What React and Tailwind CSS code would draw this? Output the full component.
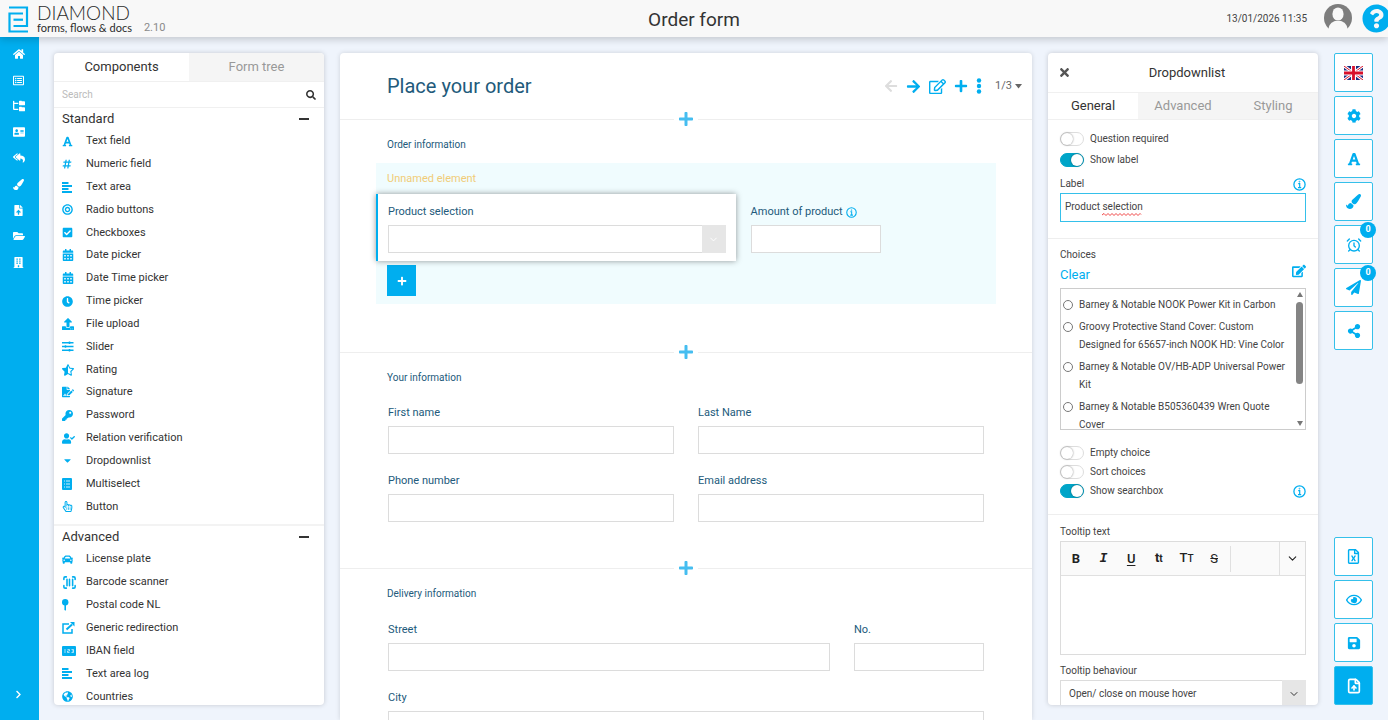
import React, { useState } from 'react';
import {
  FaHome, FaRegListAlt, FaAddressCard, FaReplyAll, FaPaintBrush, FaFileUpload, FaFolderOpen, FaBuilding,
  FaChevronRight, FaSearch, FaFont, FaHashtag, FaBullseye, FaCheckSquare, FaCalendarAlt,
  FaClock, FaUpload, FaStarHalfAlt, FaFileSignature, FaKey, FaUserCheck, FaCaretDown,
  FaRegHandPointer, FaCar, FaGlobeAmericas, FaArrowLeft, FaArrowRight,
  FaRegEdit, FaPlus, FaEdit, FaTimes, FaCog, FaPaperPlane, FaShareAlt, FaRegFileExcel, FaRegEye, FaSave,
  FaQuestionCircle,
} from 'react-icons/fa';
import { FaFolderTree } from 'react-icons/fa6';
import { AlarmClock, ChevronDown, FileUp, ScanBarcode } from 'lucide-react';

const InfoIcon = ({ size }) => (
  <svg width={size} height={size} viewBox="0 0 13 13" fill="none" stroke="#00aeef">
    <circle cx="6.5" cy="6.5" r="5.6" strokeWidth="1.3" />
    <path d="M5.200 5.700h1.500v4M5 9.600h3.200" strokeWidth="1.200" />
    <circle cx="6.5" cy="3.700" r="0.500" strokeWidth="0.800" />
  </svg>
);

const LinesIcon = () => (
  <svg width="11" height="11" viewBox="0 0 11 11" stroke="currentColor" strokeWidth="1.800">
    <path d="M0 1h6.500M0 4h10M0 7h6.500M0 10h10" />
  </svg>
);

const SliderIcon = () => (
  <svg width="12" height="11" viewBox="0 0 12 11" stroke="currentColor" strokeWidth="1.500">
    <path d="M0 1.700h11.500M0 5.500h11.500M0 9.300h11.500M7.500 0.400v2.600M3.500 4.200v2.600M7.500 8v2.600" />
  </svg>
);

const PinIcon = () => (
  <svg width="8" height="12" viewBox="0 0 8 12" fill="currentColor">
    <circle cx="3.200" cy="3.300" r="3.200" />
    <path d="M2.400 6H4v4.500L3.200 12l-.8-1.500z" />
  </svg>
);

const RedirectIcon = () => (
  <svg width="13" height="12" viewBox="0 0 13 12" fill="none" stroke="currentColor">
    <path d="M7 2H1v9h9V7" strokeWidth="1.500" />
    <path d="M4.500 7.500l5.500-5" strokeWidth="2" />
    <path d="M8 0h4.500v4.500z" fill="currentColor" stroke="none" />
  </svg>
);

const MultiselectIcon = () => (
  <svg width="10" height="12" viewBox="0 0 10 12">
    <rect width="10" height="12" rx="1" fill="currentColor" />
    <path d="M2 3h1M4 3h4M2 6h1M4 6h4M2 9h1M4 9h4" stroke="#fff" strokeWidth="0.800" />
  </svg>
);

const IbanIcon = () => (
  <svg width="14" height="10" viewBox="0 0 14 10">
    <rect width="14" height="10" rx="1" fill="currentColor" />
    <path d="M3 3v4M5.500 3.500h2v1.500h-2v1.500h2M9.500 3.500h2v3h-2M10 5h1.500" stroke="#fff" strokeWidth="0.800" fill="none" opacity="0.8" />
  </svg>
);

const standard = [
  { name: 'Text field', icon: <FaFont size={11} /> },
  { name: 'Numeric field', icon: <FaHashtag size={10} /> },
  { name: 'Text area', icon: <LinesIcon /> },
  { name: 'Radio buttons', icon: <FaBullseye size={11} /> },
  { name: 'Checkboxes', icon: <FaCheckSquare size={11} /> },
  { name: 'Date picker', icon: <FaCalendarAlt size={12} /> },
  { name: 'Date Time picker', icon: <FaCalendarAlt size={12} /> },
  { name: 'Time picker', icon: <FaClock size={11} /> },
  { name: 'File upload', icon: <FaUpload size={12} /> },
  { name: 'Slider', icon: <SliderIcon /> },
  { name: 'Rating', icon: <FaStarHalfAlt size={12} /> },
  { name: 'Signature', icon: <FaFileSignature size={12} /> },
  { name: 'Password', icon: <FaKey size={11} /> },
  { name: 'Relation verification', icon: <FaUserCheck size={13} /> },
  { name: 'Dropdownlist', icon: <FaCaretDown size={11} /> },
  { name: 'Multiselect', icon: <MultiselectIcon /> },
  { name: 'Button', icon: <FaRegHandPointer size={11} /> },
];

const advanced = [
  { name: 'License plate', icon: <FaCar size={11} /> },
  { name: 'Barcode scanner', icon: <ScanBarcode size={15} strokeWidth={2.5} /> },
  { name: 'Postal code NL', icon: <PinIcon /> },
  { name: 'Generic redirection', icon: <RedirectIcon /> },
  { name: 'IBAN field', icon: <IbanIcon /> },
  { name: 'Text area log', icon: <LinesIcon /> },
  { name: 'Countries', icon: <FaGlobeAmericas size={11} /> },
];

const navItems = [
  { label: 'Home', icon: <FaHome size={12} /> },
  { label: 'Lists', icon: <FaRegListAlt size={11} /> },
  { label: 'Structure', icon: <FaFolderTree size={12} /> },
  { label: 'Contacts', icon: <FaAddressCard size={12} /> },
  { label: 'Replies', icon: <FaReplyAll size={12} /> },
  { label: 'Themes', icon: <FaPaintBrush size={11} /> },
  { label: 'Documents', icon: <FaFileUpload size={11} /> },
  { label: 'Files', icon: <FaFolderOpen size={12} /> },
  { label: 'Organisation', icon: <FaBuilding size={11} /> },
];

const choices = [
  'Barney & Notable NOOK Power Kit in Carbon',
  'Groovy Protective Stand Cover: Custom Designed for 65657-inch NOOK HD: Vine Color',
  'Barney & Notable OV/HB-ADP Universal Power Kit',
  'Barney & Notable B505360439 Wren Quote Cover',
];

const Logo = () => (
  <svg width="22" height="27" viewBox="0 0 22 27" fill="none" stroke="#00aeef" strokeWidth="2.200">
    <path d="M1 1.500h18v18.500H5.500" />
    <path d="M15 7.500H1.500v18h18.500" />
    <path d="M5.500 13.700h9.500" />
  </svg>
);

const Avatar = () => (
  <svg width="28" height="25" viewBox="0 0 28 25">
    <circle cx="14" cy="14" r="14" fill="#7d7d7d" />
    <ellipse cx="14" cy="10" rx="5.600" ry="6.600" fill="#f8f8f8" />
    <path d="M4.500 25c.6-5 3-6.500 6.500-8h6c3.500 1.500 5.900 3 6.500 8z" fill="#f8f8f8" />
  </svg>
);

const Flag = () => (
  <svg width="19" height="14" viewBox="0 0 19 14">
    <rect width="19" height="14" fill="#1b2c80" />
    <path d="M0 0l19 14M19 0L0 14" stroke="#fff" strokeWidth="3" />
    <path d="M0 0l19 14M19 0L0 14" stroke="#d8102a" strokeWidth="1" />
    <path d="M9.500 0v14M0 7h19" stroke="#fff" strokeWidth="5" />
    <path d="M9.500 0v14M0 7h19" stroke="#d8102a" strokeWidth="2.800" />
  </svg>
);

const Header = () => (
  <header className="relative z-20 flex h-[37px] shrink-0 items-center bg-[#f8f8f8] shadow-[0_2px_8px_rgba(0,0,0,0.2)]">
    <div className="flex flex-1 items-start">
      <div className="pt-[2px] pl-2">
        <Logo />
      </div>
      <div className="pl-[7px] font-[Lato] text-[#2b2b2b]">
        <div className="text-[19px] font-light leading-[18px]">DIAMOND</div>
        <div className="text-[11px] leading-3">forms, flows &amp; docs</div>
      </div>
      <div className="self-end pl-3 text-[11px] leading-3 text-[#8a8a8a]">2.10</div>
    </div>
    <h1 className="pt-[2px] text-[19px] leading-6 text-[#333]">Order form</h1>
    <div className="flex flex-1 items-center justify-end overflow-hidden">
      <time className="mr-[17px] text-[10px] text-[#444]">13/01/2026 11:35</time>
      <button aria-label="Profile" className="mr-[10px] mb-[5px]"><Avatar /></button>
      <button aria-label="Help" className="-mr-[3px] text-[#00aeef]"><FaQuestionCircle size={29} /></button>
    </div>
  </header>
);

const NavBar = () => (
  <nav className="relative z-10 flex w-[39px] shrink-0 flex-col items-center bg-[#00aeef] pt-1 pr-[2px] text-white">
    {navItems.map((n) => (
      <button key={n.label} aria-label={n.label} className="flex h-[26px] w-full items-center justify-center">
        {n.icon}
      </button>
    ))}
    <button aria-label="Expand menu" className="mt-auto mb-4 flex h-5 w-full items-center justify-center">
      <FaChevronRight size={9} />
    </button>
  </nav>
);

const Group = ({ title, items, listClass }) => (
  <section className="pl-2">
    <div className="flex h-[22px] items-center justify-between pr-[15px]">
      <h2 className="text-[13px] leading-4 text-[#333]">{title}</h2>
      <button aria-label={`Collapse ${title}`} className="h-[2px] w-[10px] bg-[#333]"></button>
    </div>
    <ul className={listClass}>
      {items.map((item) => (
        <li key={item.name} className="flex items-center">
          <span className="w-6 text-[#00aeef]">{item.icon}</span>
          <span className="text-[11px] leading-4 text-[#333]">{item.name}</span>
        </li>
      ))}
    </ul>
  </section>
);

const ComponentsPanel = () => (
  <aside className="mb-[15px] flex w-[270px] shrink-0 flex-col overflow-hidden rounded-sm bg-white shadow-[0_0_5px_rgba(0,0,0,0.18)]">
    <div className="grid shrink-0 grid-cols-2 text-[13px]">
      <button className="h-7 text-[#333]">Components</button>
      <button className="h-7 bg-[#f5f5f5] text-[#999]">Form tree</button>
    </div>
    <div className="flex h-[27px] shrink-0 items-center border-y border-[#f0f0f0] px-2">
      <input aria-label="Search" placeholder="Search" className="min-w-0 flex-1 text-[10px] outline-none placeholder:text-[#bbb]" />
      <FaSearch size={10} className="text-[#333]" />
    </div>
    <div className="shrink-0 border-b-2 border-[#f3f3f3] pb-[6px]">
      <Group title="Standard" items={standard} listClass="grid h-[388px]" />
    </div>
    <Group title="Advanced" items={advanced} listClass="grid h-[160px]" />
  </aside>
);

const Field = ({ id, label, info }) => (
  <div>
    <label htmlFor={id} className="flex items-center gap-[3px] text-[11px] leading-4 text-[#225a7b]">
      {label}
      {info && <InfoIcon size={11} />}
    </label>
    <input id={id} className="mt-[5px] block h-7 w-full border border-[#dcdcdc] bg-white px-2 text-[11px]" />
  </div>
);

const FormSection = ({ title, children }) => (
  <section className="relative border-t border-[#eee] px-12 pt-[17px] pb-[46px]">
    <button aria-label="Add section" className="absolute -top-[9px] left-1/2 -translate-x-1/2 bg-white px-1 text-[#45bdf0]">
      <FaPlus size={16} />
    </button>
    <h3 className="-ml-px text-[10px] leading-4 text-[#225a7b]">{title}</h3>
    {children}
  </section>
);

const FormCanvas = () => (
  <main className="min-w-0 flex-1 overflow-hidden rounded-t-sm bg-white shadow-[0_0_5px_rgba(0,0,0,0.14)]">
    <div className="flex h-[66px] items-center justify-between pr-[10px] pl-[47px]">
      <h2 className="text-[20px] leading-6 text-[#225a7b]">Place your order</h2>
      <div className="flex items-center gap-2 text-[#00aeef]">
        <button aria-label="Previous page" className="text-[#ddd]"><FaArrowLeft size={14} /></button>
        <button aria-label="Next page"><FaArrowRight size={15} /></button>
        <button aria-label="Edit page"><FaRegEdit size={17} /></button>
        <button aria-label="Add page"><FaPlus size={14} /></button>
        <button aria-label="More">
          <svg width="6" height="16" viewBox="0 0 6 16" fill="currentColor">
            <circle cx="3" cy="2.500" r="2.200" />
            <circle cx="3" cy="8" r="2.200" />
            <circle cx="3" cy="13.500" r="2.200" />
          </svg>
        </button>
        <button className="ml-[5px] flex items-center gap-[3px] text-[11px] leading-4 text-[#666]">
          1/3
          <svg width="7" height="5" viewBox="0 0 7 5" fill="currentColor"><path d="M0 0h7L3.500 4.500z" /></svg>
        </button>
      </div>
    </div>

    <FormSection title="Order information">
      <div className="-mx-3 mt-[10px] mb-[2px] bg-[#f0fcfe] pt-2 pb-2">
        <p className="pl-[11px] text-[11px] leading-4 text-[#f0cc78]">Unnamed element</p>
        <div className="mt-[7px] flex">
          <div className="w-[58%] border-l-2 border-[#00aeef] bg-white px-[10px] pt-[10px] pb-2 shadow-[0_0_6px_rgba(0,0,0,0.4)]">
            <label htmlFor="product" className="block text-[11px] leading-4 text-[#225a7b]">Product selection</label>
            <div className="relative mt-[5px]">
              <select id="product" className="block h-7 w-full appearance-none border border-[#dcdcdc] bg-white px-2 text-[11px]">
                <option></option>
              </select>
              <span className="pointer-events-none absolute inset-y-0 right-0 flex w-6 items-center justify-center bg-[#e6e6e6] text-white">
                <ChevronDown size={11} />
              </span>
            </div>
          </div>
          <div className="ml-[15px] w-[21%] pt-[10px]">
            <Field id="amount" label="Amount of product" info />
          </div>
        </div>
        <button aria-label="Add element" className="mt-1 ml-[11px] flex h-[31px] w-[29px] items-center justify-center bg-[#00aeef] text-white">
          <FaPlus size={10} />
        </button>
      </div>
    </FormSection>

    <FormSection title="Your information">
      <div className="mt-[19px] grid grid-cols-2 gap-x-6 gap-y-[19px]">
        <Field id="first" label="First name" />
        <Field id="last" label="Last Name" />
        <Field id="phone" label="Phone number" />
        <Field id="email" label="Email address" />
      </div>
    </FormSection>

    <FormSection title="Delivery information">
      <div className="mt-5 grid grid-cols-[1fr_130px] gap-x-6 gap-y-[19px]">
        <Field id="street" label="Street" />
        <Field id="no" label="No." />
        <div className="col-span-2">
          <Field id="city" label="City" />
        </div>
      </div>
    </FormSection>
  </main>
);

const Toggle = ({ label, on }) => {
  const [checked, setChecked] = useState(!!on);
  return (
    <label className="flex items-center gap-[6px] text-[10px] leading-4 text-[#444]">
      <input
        type="checkbox"
        checked={checked}
        onChange={(e) => setChecked(e.target.checked)}
        className="h-[14px] w-6 appearance-none rounded-full border border-[#ddd] bg-white before:block before:size-3 before:rounded-full before:bg-white before:shadow-[0_0_2px_rgba(0,0,0,0.5)] checked:border-[#00a5c8] checked:bg-[#00a5c8] checked:before:ml-[10px]"
      />
      {label}
    </label>
  );
};

const TextTools = () => (
  <div className="flex h-[34px] items-center border-b border-[#e0e0e0] bg-[#fafafa] text-[13px] leading-4 text-[#222]">
    <div className="ml-px grid w-[166px] grid-cols-6">
      <button aria-label="Bold" className="font-bold">B</button>
      <button aria-label="Italic" className="font-['Liberation_Mono'] font-bold italic">I</button>
      <button aria-label="Underline" className="font-medium underline underline-offset-2">U</button>
      <button aria-label="Lowercase" className="font-bold">t<span className="text-[10px]">t</span></button>
      <button aria-label="Uppercase" className="font-medium">T<span className="text-[10px]">T</span></button>
      <button aria-label="Strikethrough" className="line-through">S</button>
    </div>
    <div className="ml-[2px] h-[26px] w-px bg-[#e0e0e0]"></div>
    <button aria-label="More tools" className="ml-auto flex h-full w-[26px] items-center justify-center border-l border-[#e0e0e0]">
      <ChevronDown size={13} />
    </button>
  </div>
);

const PropertiesPanel = () => {
  const [label, setLabel] = useState('Product selection');

  return (
    <aside className="mb-[15px] w-[270px] shrink-0 overflow-hidden rounded-sm bg-white text-[#444] shadow-[0_0_5px_rgba(0,0,0,0.18)]">
      <div className="grid h-[39px] grid-cols-[33px_1fr_25px] items-center">
        <button aria-label="Close" className="flex justify-center text-[#555]"><FaTimes size={13} /></button>
        <h2 className="text-center text-[13px] text-[#333]">Dropdownlist</h2>
      </div>
      <div className="grid h-7 grid-cols-3 border-y border-[#f0f0f0] text-[13px] text-[#999]">
        <button className="text-[#333]">General</button>
        <button className="bg-[#f5f5f5]">Advanced</button>
        <button className="bg-[#f5f5f5]">Styling</button>
      </div>

      <div className="px-3 pt-[11px] pb-4">
        <div className="flex flex-col gap-[5px]">
          <Toggle label="Question required" />
          <Toggle label="Show label" on />
        </div>
        <div className="mt-2 flex items-center justify-between">
          <label htmlFor="labelText" className="text-[10px] leading-4">Label</label>
          <InfoIcon size={13} />
        </div>
        <div className="relative mt-px">
          <input
            id="labelText"
            value={label}
            spellCheck={false}
            onChange={(e) => setLabel(e.target.value)}
            className="block h-[29px] w-full border border-[#35c0ea] px-1 pb-[2px] text-[10px] outline-none"
          />
          <svg className="absolute bottom-[6px] left-[42px]" width="41" height="3" viewBox="0 0 41 3">
            <path d="M0 2l2-1.500 2 2 2-2 2 2 2-2 2 2 2-2 2 2 2-2 2 2 2-2 2 2 2-2 2 2 2-2 2 2 2-2 2 2 2-2 1 1" fill="none" stroke="#e33" strokeWidth="0.900" />
          </svg>
        </div>
      </div>

      <div className="border-t border-[#eee] px-3 pt-2 pb-[15px]">
        <div className="flex items-end justify-between">
          <div>
            <h3 className="text-[10px] leading-4">Choices</h3>
            <button className="mt-1 block text-[13px] leading-4 text-[#00aeef]">Clear</button>
          </div>
          <button aria-label="Edit choices" className="pb-[5px] text-[#00aeef]"><FaEdit size={14} /></button>
        </div>
        <div className="mt-[5px] flex h-[142px] overflow-hidden border border-[#ccc]">
          <div className="flex-1 overflow-hidden pt-[7px] pl-[2px]">
            {choices.map((c) => (
              <label key={c} className="mb-1 flex items-start gap-[6px] text-[10px] leading-[18px]">
                <input
                  type="radio"
                  name="choice"
                  className="mt-1 size-[10px] shrink-0 appearance-none rounded-full border border-[#777] bg-white checked:border-[3px] checked:border-[#00aeef]"
                />
                <span>{c}</span>
              </label>
            ))}
          </div>
          <div aria-hidden="true" className="flex w-[11px] shrink-0 flex-col items-center py-[3px] text-[#777]">
            <svg width="6" height="6" viewBox="0 0 6 6" fill="currentColor"><path d="M3 0l3 5H0z" /></svg>
            <div className="mt-1 h-[82px] w-[7px] rounded-full bg-[#848484]"></div>
            <svg className="mt-auto" width="6" height="6" viewBox="0 0 6 6" fill="currentColor"><path d="M3 6l3-5H0z" /></svg>
          </div>
        </div>
        <div className="mt-[15px] flex flex-col gap-[3px]">
          <Toggle label="Empty choice" />
          <Toggle label="Sort choices" />
          <div className="flex items-center justify-between">
            <Toggle label="Show searchbox" on />
            <InfoIcon size={13} />
          </div>
        </div>
      </div>

      <div className="border-t border-[#eee] px-3 pt-[9px]">
        <label htmlFor="tooltip" className="block text-[10px] leading-4">Tooltip text</label>
        <div className="mt-px border border-[#dcdcdc]">
          <TextTools />
          <textarea id="tooltip" className="block h-[78px] w-full resize-none px-2 text-[10px] outline-none"></textarea>
        </div>
        <label htmlFor="behaviour" className="mt-2 block text-[10px] leading-4">Tooltip behaviour</label>
        <div className="relative mt-px">
          <select id="behaviour" className="block h-[27px] w-full appearance-none border border-[#dcdcdc] bg-white px-2 text-[10px]">
            <option>Open/ close on mouse hover</option>
          </select>
          <span className="pointer-events-none absolute inset-y-0 right-0 flex w-6 items-center justify-center bg-[#e6e6e6] text-[#333]">
            <ChevronDown size={12} />
          </span>
        </div>
      </div>
    </aside>
  );
};

const ToolButton = ({ label, badge, filled, children }) => (
  <button
    aria-label={label}
    className={
      'relative flex size-[39px] items-center justify-center rounded-xs border border-[#35c0ea] ' +
      (filled ? 'bg-[#00aeef] text-white' : 'bg-white text-[#00aeef]')
    }
  >
    {children}
    {badge !== undefined && (
      <span className="absolute -top-1 -right-1 flex size-4 items-center justify-center rounded-full bg-[#00aeef] text-[9px] font-bold text-white">
        {badge}
      </span>
    )}
  </button>
);

const ToolBar = () => (
  <div className="mb-[15px] flex shrink-0 flex-col justify-between">
    <div className="flex flex-col gap-1">
      <ToolButton label="Language"><Flag /></ToolButton>
      <ToolButton label="Settings"><FaCog size={14} /></ToolButton>
      <ToolButton label="Fonts"><FaFont size={14} /></ToolButton>
      <ToolButton label="Theme"><FaPaintBrush size={15} /></ToolButton>
      <ToolButton label="Reminders" badge={0}><AlarmClock size={16} /></ToolButton>
      <ToolButton label="Send" badge={0}><FaPaperPlane size={15} /></ToolButton>
      <ToolButton label="Share"><FaShareAlt size={14} /></ToolButton>
    </div>
    <div className="flex flex-col gap-1">
      <ToolButton label="Export"><FaRegFileExcel size={15} /></ToolButton>
      <ToolButton label="Preview"><FaRegEye size={16} /></ToolButton>
      <ToolButton label="Save"><FaSave size={14} /></ToolButton>
      <ToolButton label="Publish" filled><FileUp size={16} strokeWidth={2.5} /></ToolButton>
    </div>
  </div>
);

const App = () => {
  return (
    <div className="flex h-screen flex-col overflow-hidden bg-[#eff4fc] font-[Roboto,sans-serif]">
      <Header />
      <div className="flex min-h-0 flex-1">
        <NavBar />
        <div className="flex min-w-0 flex-1 gap-4 px-[15px] pt-4">
          <ComponentsPanel />
          <FormCanvas />
          <PropertiesPanel />
          <ToolBar />
        </div>
      </div>
    </div>
  );
};

export default App;
